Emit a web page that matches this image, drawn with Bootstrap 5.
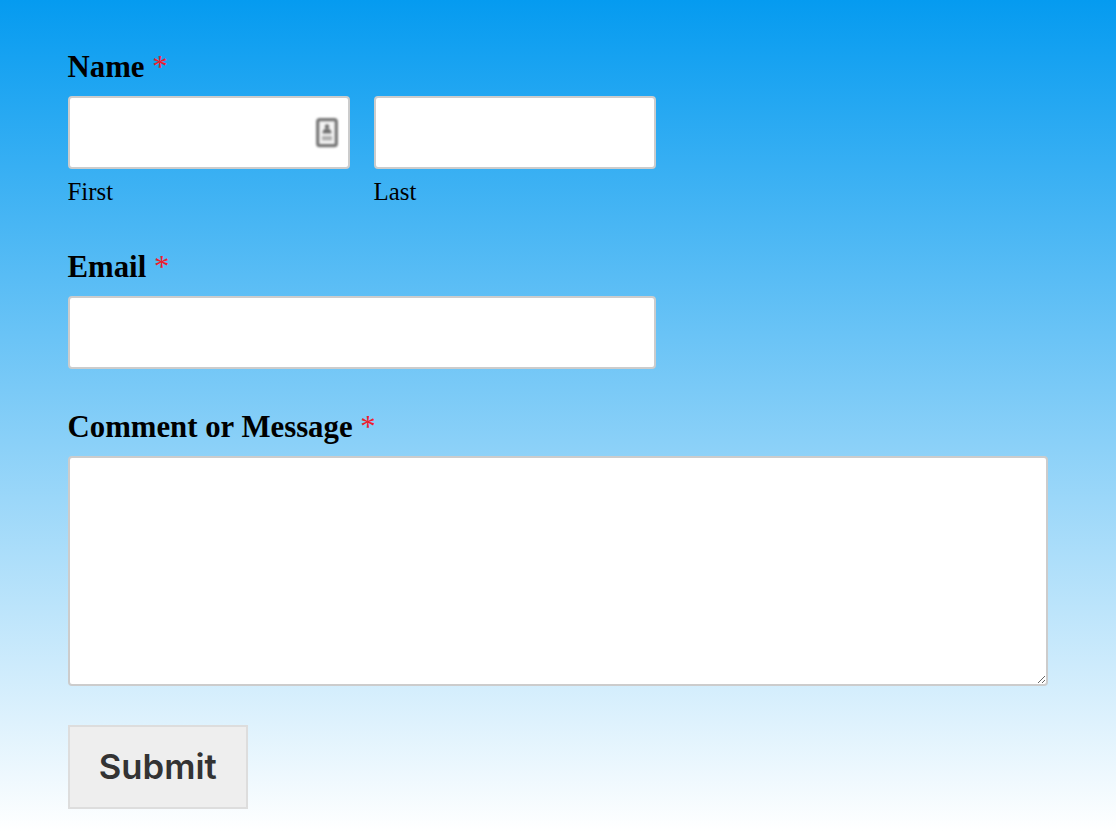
<!DOCTYPE html>
<html lang="en">
<head>
<meta charset="utf-8">
<title>Contact form</title>
<link href="https://cdn.jsdelivr.net/npm/bootstrap@5.3.0/dist/css/bootstrap.min.css" rel="stylesheet">
<style>
html, body { height: 838px; overflow: hidden; }
body { background: linear-gradient(180deg, #059bf0 0, #ffffff 832px); background-repeat: no-repeat; font-family: "Liberation Serif", serif; color: #000; }
.form-wrap { width: 980.5px; margin-left: 67.5px; padding-top: 47px; }
.field-label { font-size: 30.8px; font-weight: 700; line-height: 40px; margin: 0 0 9px; display: block; }
.req { color: #ee1c2e; font-weight: 400; }
.field-input { display: block; height: 73px; border: 2px solid #ccc; border-radius: 4px; background: #fff; width: 100%; box-shadow: none; }
.half { width: 282.5px; }
.wide { width: 588.5px; }
.sub-label { font-size: 24.9px; line-height: 30px; margin-top: 8px; }
.group-name { margin-bottom: 40px; }
.group-email { margin-bottom: 38px; }
.group-msg { margin-bottom: 39px; }
.field-area { height: 230px; resize: vertical; display: block; }
.name-gap { gap: 23.5px; }
.auto-ico { position: absolute; right: 12px; top: 22px; width: 22px; height: 30px; filter: blur(.9px); }
.send-btn { display: block; width: 180.5px; height: 84px; background: #eee; border: 2px solid #ddd; border-radius: 0; color: #333; font-family: Inter, sans-serif; font-size: 34.7px; font-weight: 600; padding: 0 0 1px; }
</style>
</head>
<body>
<form class="form-wrap">
  <div class="group-name">
    <label class="field-label">Name <span class="req">*</span></label>
    <div class="d-flex name-gap">
      <div class="half">
        <div class="position-relative">
          <input class="field-input" type="text" aria-label="First">
          <svg class="auto-ico" viewBox="0 0 22 30" aria-hidden="true">
            <rect x="1.7" y="1.7" width="18.6" height="26" rx="2" fill="#f4f4f4" stroke="#757575" stroke-width="3.2"/>
            <circle cx="11" cy="8.5" r="2.2" fill="#707070"/>
            <path d="M6.5 15.5 Q6.5 10.5 11 10.5 Q15.5 10.5 15.5 15.5 Z" fill="#707070"/>
            <rect x="6" y="18" width="10" height="4.5" fill="#b0b0b0"/>
          </svg>
        </div>
        <div class="sub-label">First</div>
      </div>
      <div class="half">
        <input class="field-input" type="text" aria-label="Last">
        <div class="sub-label">Last</div>
      </div>
    </div>
  </div>
  <div class="group-email">
    <label class="field-label">Email <span class="req">*</span></label>
    <input class="field-input wide" type="email">
  </div>
  <div class="group-msg">
    <label class="field-label">Comment or Message <span class="req">*</span></label>
    <textarea class="field-input field-area"></textarea>
  </div>
  <button type="button" class="send-btn">Submit</button>
</form>
<script src="https://cdn.jsdelivr.net/npm/bootstrap@5.3.0/dist/js/bootstrap.bundle.min.js"></script>
</body>
</html>
